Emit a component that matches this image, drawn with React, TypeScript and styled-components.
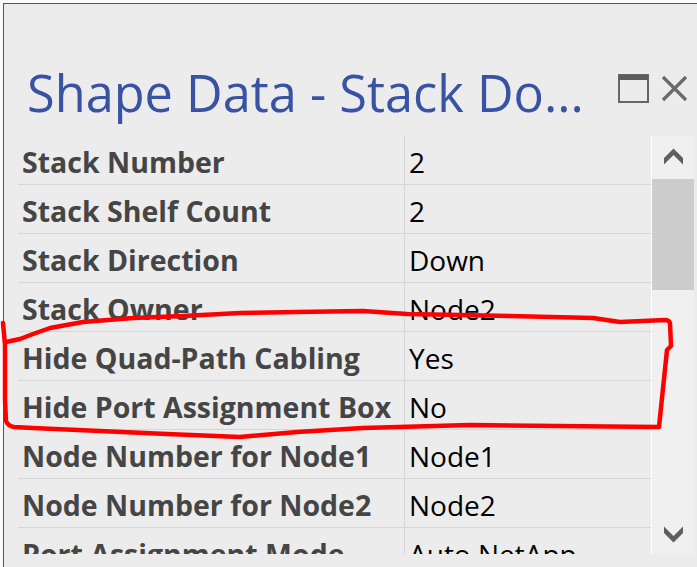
import styled, { createGlobalStyle } from "styled-components";

const GlobalStyle = createGlobalStyle`
  html, body {
    margin: 0;
    padding: 0;
    background: #ffffff;
    overflow: hidden;
  }
`;

const rows = [
  { label: "Stack Number", value: "2" },
  { label: "Stack Shelf Count", value: "2" },
  { label: "Stack Direction", value: "Down" },
  { label: "Stack Owner", value: "Node2" },
  { label: "Hide Quad-Path Cabling", value: "Yes" },
  { label: "Hide Port Assignment Box", value: "No" },
  { label: "Node Number for Node1", value: "Node1" },
  { label: "Node Number for Node2", value: "Node2" },
  { label: "Port Assignment Mode", value: "Auto NetApp" },
];

export default function App() {
  return (
    <>
      <GlobalStyle />
      <Page>
        <Frame>
          <Header>
            <Title>Shape Data - Stack Do...</Title>
            <WindowButtons>
              <svg width="31" height="29" viewBox="0 0 31 29">
                <rect x="1" y="1" width="29" height="27" fill="none" stroke="#666" strokeWidth="2" />
                <rect x="1" y="1" width="29" height="5" fill="#5c5c5c" />
              </svg>
              <svg width="27" height="27" viewBox="0 0 27 27">
                <path d="M2 2 L25 25 M25 2 L2 25" stroke="#6a6a6a" strokeWidth="3.2" />
              </svg>
            </WindowButtons>
          </Header>
          <Body>
            <Table>
              {rows.map((r) => (
                <Row key={r.label}>
                  <Label>{r.label}</Label>
                  <Value>{r.value}</Value>
                </Row>
              ))}
            </Table>
            <Scrollbar>
              <ScrollButton>
                <svg width="19" height="17" viewBox="0 0 19 17">
                  <polygon points="0,10 9.5,0.5 19,10 19,16.5 9.5,7 0,16.5" fill="#5f5f5f" />
                </svg>
              </ScrollButton>
              <Track>
                <Thumb />
              </Track>
              <ScrollButton>
                <svg width="19" height="17" viewBox="0 0 19 17">
                  <polygon points="0,0.5 9.5,10 19,0.5 19,7 9.5,16.5 0,7" fill="#5f5f5f" />
                </svg>
              </ScrollButton>
            </Scrollbar>
          </Body>
        </Frame>
        <Annotation width="697" height="567" viewBox="0 0 697 567">
          <path
            d="M3,323 L5,345 L5,400 L6,421 Q8,426 14,427 L33,428 L100,431 L167,434 L240,437 L297,432 L363,428 L470,425 L659,427 L667,350 L671,346 L670,323 Q669,320 665,320 L620,322 L593,318 L510,316 L460,315 L407,314 L363,311 L297,312 L240,313 L183,316 L133,318 L83,322 L50,328 L33,334 L20,339 L6,342"
            fill="none"
            stroke="#ff0000"
            strokeWidth="4.5"
            strokeLinejoin="round"
            strokeLinecap="round"
          />
        </Annotation>
      </Page>
    </>
  );
}

const Page = styled.div`
  position: relative;
  width: 697px;
  height: 567px;
  padding: 3px 0 0 3px;
  box-sizing: border-box;
  background: #fafafa;
`;

const Frame = styled.div`
  height: 100%;
  box-sizing: border-box;
  border-top: 1px solid #3f52a3;
  border-left: 1px solid #3f52a3;
  background: #ececec;
  display: flex;
  flex-direction: column;
`;

const Header = styled.div`
  height: 132px;
  display: flex;
  align-items: flex-start;
  justify-content: space-between;
  padding: 54px 9px 0 23px;
  box-sizing: border-box;
`;

const Title = styled.h1`
  margin: 0;
  font-family: "Open Sans", "Noto Sans", sans-serif;
  font-weight: 400;
  font-size: 50.5px;
  line-height: 70px;
  color: #3852a4;
  white-space: nowrap;
`;

const WindowButtons = styled.div`
  display: flex;
  align-items: center;
  gap: 12px;
  margin-top: 16px;
`;

const Body = styled.div`
  flex: 1;
  display: flex;
  min-height: 0;
  padding: 0 3px 13px 14px;
`;

const Table = styled.div`
  flex: 1;
  overflow: hidden;
`;

const Row = styled.div`
  display: grid;
  grid-template-columns: 387px 1fr;
  height: 49px;
  border-bottom: 1px solid #d6d6d6;
  box-sizing: border-box;
`;

const Label = styled.div`
  display: flex;
  align-items: center;
  padding: 3px 0 0 4px;
  border-right: 1px solid #d6d6d6;
  font-family: "Open Sans", "Noto Sans", sans-serif;
  font-weight: 700;
  font-size: 28.5px;
  color: #454545;
  white-space: nowrap;
`;

const Value = styled.div`
  display: flex;
  align-items: center;
  padding: 3px 0 0 4px;
  font-family: "Open Sans", "Noto Sans", sans-serif;
  font-size: 28px;
  color: #000;
  white-space: nowrap;
`;

const Scrollbar = styled.div`
  width: 42px;
  display: flex;
  flex-direction: column;
  background: #f0f0f0;
  border-left: 1px solid #ffffff;
`;

const ScrollButton = styled.div`
  height: 40px;
  display: flex;
  align-items: center;
  justify-content: center;
`;

const Track = styled.div`
  flex: 1;
  padding-top: 3px;
`;

const Thumb = styled.div`
  height: 111px;
  background: #cdcdcd;
`;

const Annotation = styled.svg`
  position: absolute;
  left: 0;
  top: 0;
  pointer-events: none;
`;
